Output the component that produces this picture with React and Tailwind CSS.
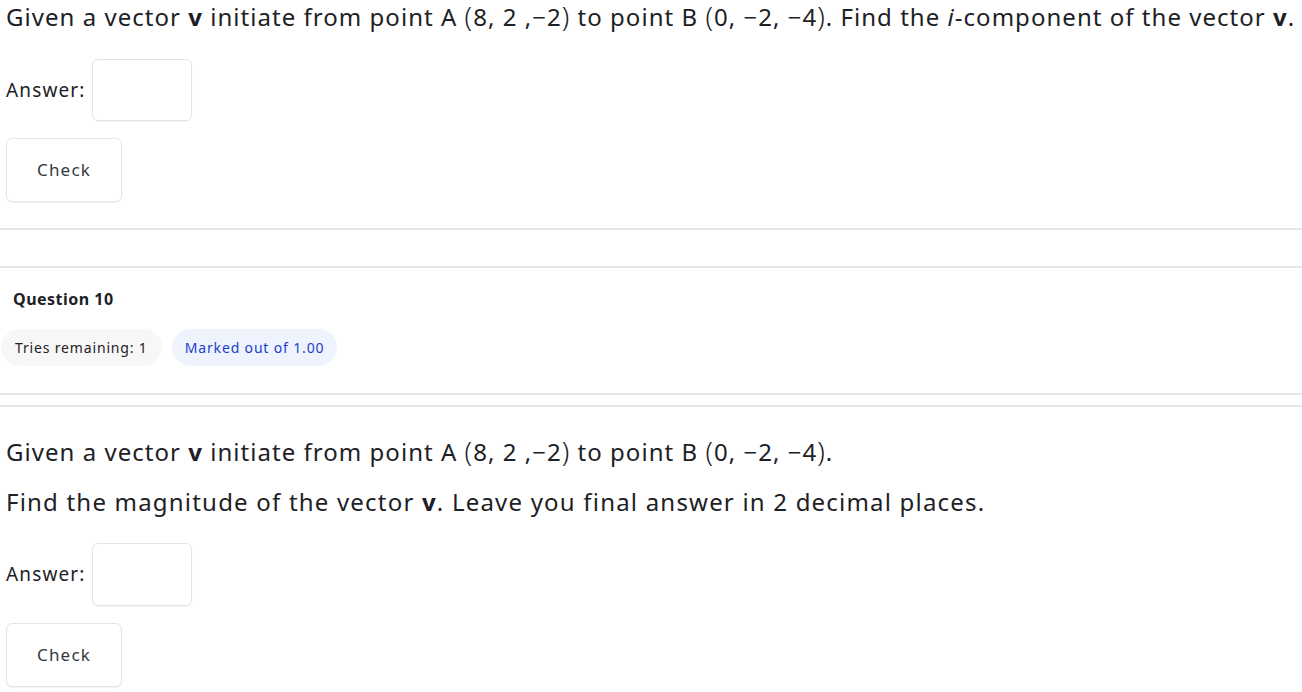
import React from 'react';

const font = { fontFamily: '"Noto Sans", "Open Sans", sans-serif' };

const Paren = ({ children }) => (
  <span className="text-[27px] font-light leading-none align-[-1px]">{children}</span>
);

const Point = ({ a, b, c }) => (
  <span>
    <Paren>(</Paren>
    {a}, {b} ,{c}
    <Paren>)</Paren>
  </span>
);

const AnswerBlock = ({ tall }) => (
  <div>
    <div className="flex items-center">
      <span className="ml-[6px] text-[19px] tracking-[0.06em] text-[#1d2125]">Answer:</span>
      <input
        type="text"
        className={`ml-[6px] w-[100px] ${tall ? 'h-[63px]' : 'h-[62px]'} rounded-[6px] border border-[#e2e4e8] shadow-[0_1px_1px_rgba(0,0,0,0.04)] outline-none`}
      />
    </div>
    <button className="block mt-[17px] ml-[6px] w-[116px] h-[64px] rounded-[6px] border border-[#e2e5ea] bg-white text-[17px] tracking-[0.07em] text-[#343a40] shadow-[0_1px_1px_rgba(0,0,0,0.05)]">
      Check
    </button>
  </div>
);

export default function App() {
  return (
    <div className="bg-white w-[1302px] h-[692px] overflow-hidden text-[#1d2125]" style={font}>
      <p className="ml-[6px] text-[24px] leading-[34px] whitespace-nowrap tracking-[0.043em]">
        Given a vector <b>v</b> initiate from point A <Point a="8" b="2" c="−2" /> to point B{' '}
        <Paren>(</Paren>0, −2, −4<Paren>)</Paren>. Find the <i>i</i>-component of the vector <b>v</b>.
      </p>

      <div className="mt-[25px]">
        <AnswerBlock />
      </div>

      <div className="mt-[26px] border-t-2 border-[#e6e6e6]" />
      <div className="mt-[36px] border-t-2 border-[#e6e6e6]" />

      <div className="mt-[19px] ml-[13px] text-[16px] leading-[24px] font-bold tracking-[0.03em] text-[#1d2125]">
        Question 10
      </div>

      <div className="mt-[18px] flex items-center gap-[10px] pl-[1px]">
        <span className="h-[37px] px-[14px] flex items-center rounded-full bg-[#f7f7f7] text-[14px] tracking-[0.06em] text-[#1d2125]">
          Tries remaining: 1
        </span>
        <span className="h-[37px] px-[13px] flex items-center rounded-full bg-[#eef3fe] text-[14px] tracking-[0.06em] text-[#1a3fc7]">
          Marked out of 1.00
        </span>
      </div>

      <div className="mt-[27px] border-t-2 border-[#e6e6e6]" />
      <div className="mt-[10px] border-t-2 border-[#e6e6e6]" />

      <div className="mt-[28px] ml-[6px] text-[24px] leading-[34px] tracking-[0.043em]">
        <p>
          Given a vector <b>v</b> initiate from point A <Point a="8" b="2" c="−2" /> to point B{' '}
          <Paren>(</Paren>0, −2, −4<Paren>)</Paren>.
        </p>
        <p className="mt-[16px] tracking-[0.05em]">
          Find the magnitude of the vector <b>v</b>. Leave you final answer in 2 decimal places.
        </p>
      </div>

      <div className="mt-[24px]">
        <AnswerBlock tall />
      </div>
    </div>
  );
}
